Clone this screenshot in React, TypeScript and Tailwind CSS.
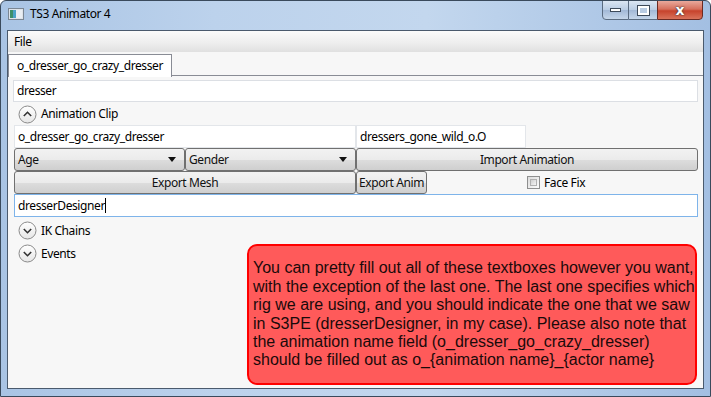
import React from "react";

const ui = { fontFamily: '"Noto Sans", "Open Sans", sans-serif', letterSpacing: "-0.4px" };

const calloutText =
  "You can pretty fill out all of these textboxes however you want, with the exception of the last one. The last one specifies which rig we are using, and you should indicate the one that we saw in S3PE (dresserDesigner, in my case). Please also note that the animation name field (o_dresser_go_crazy_dresser) should be filled out as o_{animation name}_{actor name}";

function Chevron({ up }: { up?: boolean }) {
  return (
    <svg width="19" height="19" viewBox="0 0 19 19">
      <defs>
        <linearGradient id={up ? "cu" : "cd"} x1="0" y1="0" x2="0" y2="1">
          <stop offset="0" stopColor="#ffffff" />
          <stop offset="1" stopColor="#e6e6e6" />
        </linearGradient>
      </defs>
      <circle cx="9.5" cy="9.5" r="8.5" fill={`url(#${up ? "cu" : "cd"})`} stroke="#8a8a8a" strokeWidth="1" />
      {up ? (
        <path d="M5.8 11 L9.5 7.3 L13.2 11" fill="none" stroke="#333" strokeWidth="1.6" />
      ) : (
        <path d="M5.8 8 L9.5 11.7 L13.2 8" fill="none" stroke="#333" strokeWidth="1.6" />
      )}
    </svg>
  );
}

function Btn({ children, className = "" }: { children: React.ReactNode; className?: string }) {
  return (
    <div
      className={
        "flex items-center justify-center whitespace-nowrap border border-[#707070] rounded-[3px] bg-[linear-gradient(#f2f2f2_0%,#ebebeb_50%,#dddddd_51%,#cfcfcf_100%)] text-[12px] text-[#111] leading-none " +
        className
      }
    >
      {children}
    </div>
  );
}

function Combo({ label, className = "" }: { label: string; className?: string }) {
  return (
    <div
      className={
        "flex items-center justify-between pl-[3px] pr-[8px] border border-[#707070] rounded-[3px] bg-[linear-gradient(#f2f2f2_0%,#ebebeb_50%,#dddddd_51%,#cfcfcf_100%)] text-[12px] text-[#111] leading-none " +
        className
      }
    >
      <span>{label}</span>
      <svg width="8" height="5" viewBox="0 0 8 5">
        <path d="M0 0 L8 0 L4 5 Z" fill="#111" />
      </svg>
    </div>
  );
}

export default function App() {
  return (
    <div
      className="w-[711px] h-[397px] flex flex-col relative bg-[linear-gradient(90deg,#a9c4e4_0%,#bcd2ec_30%,#c3d7ee_60%,#a3bfe2_100%)] border border-[#3a4a5c] rounded-t-[6px] overflow-hidden"
      style={ui}
    >
      {/* Title bar */}
      <div className="h-[29px] flex items-start relative">
        <div className="flex items-center h-[26px] pl-[7px] gap-[6px]">
          <svg width="16" height="12" viewBox="0 0 16 12">
            <rect x="0.5" y="0.5" width="15" height="11" fill="#dde3ea" stroke="#7b8794" />
            <rect x="2" y="2" width="3" height="8" fill="#3b8f6a" />
            <rect x="5" y="2" width="3" height="8" fill="#4aa3c8" />
            <rect x="8" y="2" width="6" height="8" fill="#e9eef3" />
          </svg>
          <span className="text-[12px] text-black">TS3 Animator 4</span>
        </div>
        <div className="ml-auto flex h-[20px] mr-[7px] mt-[-1px]">
          <div className="w-[27px] h-full border border-[#5a6b80] rounded-bl-[4px] bg-[linear-gradient(#dbe6f3,#b9cce3_50%,#a2b8d6_51%,#c5d6ea)] flex items-center justify-center">
            <div className="w-[11px] h-[4px] bg-white border border-[#3d4a5a]" />
          </div>
          <div className="w-[28px] h-full border-y border-[#5a6b80] bg-[linear-gradient(#dbe6f3,#b9cce3_50%,#a2b8d6_51%,#c5d6ea)] flex items-center justify-center">
            <div className="w-[11px] h-[9px] border-[2px] border-white outline outline-1 outline-[#3d4a5a] bg-[#b9cce3]" />
          </div>
          <div className="w-[46px] h-full border border-[#6b2a22] rounded-br-[4px] bg-[linear-gradient(#e9a99c,#d6705d_45%,#c7432c_55%,#d9735b)] flex items-center justify-center">
            <span
              className="text-white font-bold text-[14px] leading-none"
              style={{ fontFamily: '"DejaVu Sans", sans-serif', textShadow: "0 0 2px #333, 0 0 1px #333", letterSpacing: 0 }}
            >
              x
            </span>
          </div>
        </div>
      </div>

      {/* Client */}
      <div className="mx-[6px] mb-[7px] flex-1 flex flex-col border border-[#4a5a6d] bg-[#f7f7f7]">
        {/* Menu */}
        <div className="h-[21px] flex items-center px-[6px] bg-[linear-gradient(#fbfbfb,#ededed_60%,#e0e0e0)] text-[12px] text-black">
          File
        </div>
        {/* Tabs */}
        <div className="mt-[2px] flex items-end h-[22px]">
          <div className="h-[23px] px-[8px] flex items-center border border-b-0 border-[#898c95] bg-white text-[12px] text-black relative top-[1px]">
            o_dresser_go_crazy_dresser
          </div>
          <div className="flex-1 border-b border-[#898c95]" />
        </div>
        <div className="flex-1 flex flex-col px-[5px] pt-[4px] text-[12px] text-black">
          <div className="h-[22px] flex items-center px-[3px] bg-white border border-[#dcdfe4]">dresser</div>

          <div className="h-[23px] flex items-center gap-[4px] pl-[5px] pt-[1px]">
            <Chevron up />
            <span>Animation Clip</span>
          </div>

          <div className="pl-[1px] flex flex-col">
            <div className="flex h-[23px]">
              <div className="w-[342px] flex items-center px-[3px] bg-white border border-[#e3e6ea]">o_dresser_go_crazy_dresser</div>
              <div className="w-[170px] flex items-center px-[3px] bg-white border border-[#e3e6ea]">dressers_gone_wild_o.O</div>
            </div>
            <div className="flex h-[23px]">
              <Combo label="Age" className="w-[171px]" />
              <Combo label="Gender" className="w-[171px]" />
              <Btn className="flex-1">Import Animation</Btn>
            </div>
            <div className="flex h-[23px]">
              <Btn className="w-[342px]">Export Mesh</Btn>
              <Btn className="w-[71px]">Export Anim</Btn>
              <div className="flex items-center pl-[100px] gap-[4px]">
                <div className="w-[13px] h-[13px] border border-[#8e8f8f] bg-[linear-gradient(135deg,#dcdcdc,#fbfbfb)] p-[2px]">
                  <div className="w-full h-full border border-[#b0b0b0] bg-[linear-gradient(135deg,#cfcfcf,#f4f4f4)]" />
                </div>
                <span>Face Fix</span>
              </div>
            </div>
            <div className="h-[23px] flex items-center px-[3px] bg-white border border-[#7eb4ea]">
              <span>dresserDesigner</span>
              <span className="inline-block w-[1px] h-[15px] bg-black" />
            </div>
          </div>

          <div className="flex flex-col pt-[2px]">
            <div className="h-[23px] flex items-center gap-[4px] pl-[5px]">
              <Chevron />
              <span>IK Chains</span>
            </div>
            <div className="h-[23px] flex items-center gap-[4px] pl-[5px]">
              <Chevron />
              <span>Events</span>
            </div>
          </div>
        </div>
      </div>

      {/* Callout overlay */}
      <div
        className="absolute left-[246px] top-[243px] w-[450px] h-[141px] border-2 border-[#ff0000] rounded-[10px] bg-[#ff5a5a] flex items-center pl-[4px] text-[16px] leading-[18.4px] text-[#1a0a0a]"
        style={{ fontFamily: '"Liberation Sans", Arial, sans-serif', letterSpacing: 0 }}
      >
        <p className="w-[445px]">{calloutText}</p>
      </div>
    </div>
  );
}
